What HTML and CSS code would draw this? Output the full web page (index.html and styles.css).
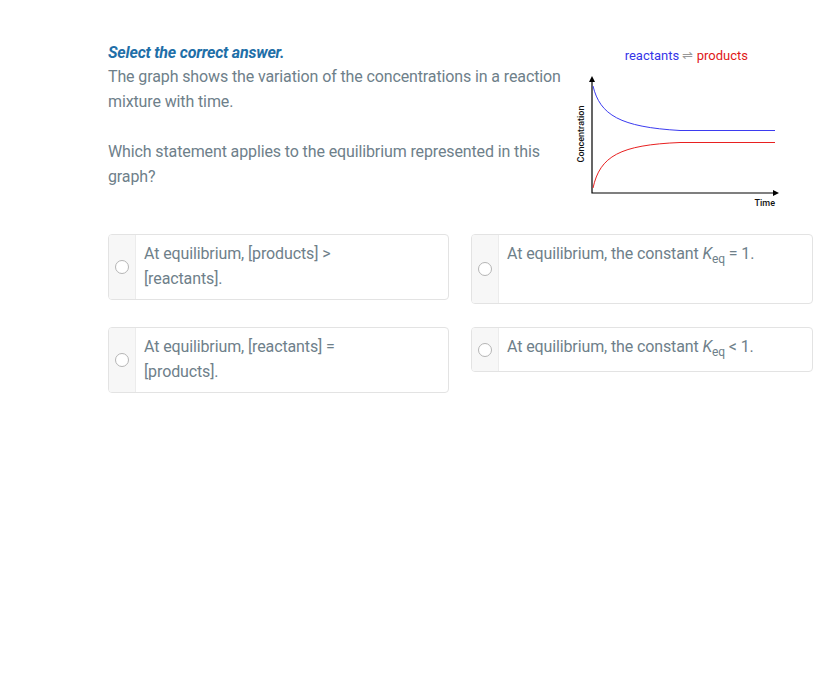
FILE: index.html
```html
<!DOCTYPE html>
<html>
<head>
<meta charset="utf-8">
<link rel="stylesheet" href="styles.css">
</head>
<body>
<div class="page">
  <div class="question">
    <div class="stem">
      <p class="instr">Select the correct answer.</p>
      <p class="txt">The graph shows the variation of the concentrations in a reaction mixture with time.</p>
      <p class="txt">Which statement applies to the equilibrium represented in this graph?</p>
    </div>
    <div class="figure">
      <div class="eq"><span class="blue">reactants</span> <span class="arrows">&#8652;</span> <span class="red">products</span></div>
      <svg class="graph" width="210" height="140" viewBox="0 0 210 140">
        <text class="ylabel" x="0" y="0" transform="translate(14 63) rotate(-90)" text-anchor="middle">Concentration</text>
        <path d="M22 10 V122 H206" fill="none" stroke="#000" stroke-width="1.2"/>
        <path d="M22 5 L19 11 L25 11 Z" fill="#000"/>
        <path d="M209 122 L203 119 L203 125 Z" fill="#000"/>
        <path d="M23 15 C 30 44, 50 56, 110 59.5 L205 59.5" fill="none" stroke="#3b3bf0" stroke-width="1"/>
        <path d="M23 117 C 30 85, 50 74, 110 71.5 L205 71.5" fill="none" stroke="#e82020" stroke-width="1"/>
        <text class="xlabel" x="205" y="135" text-anchor="end">Time</text>
      </svg>
    </div>
  </div>
  <div class="options">
    <label class="opt">
      <span class="radio-col"><span class="radio"></span></span>
      <span class="opt-text">At equilibrium, [products] &gt; [reactants].</span>
    </label>
    <label class="opt tall">
      <span class="radio-col"><span class="radio"></span></span>
      <span class="opt-text">At equilibrium, the constant <i class="k">K</i><sub>eq</sub> = 1.</span>
    </label>
    <label class="opt">
      <span class="radio-col"><span class="radio"></span></span>
      <span class="opt-text">At equilibrium, [reactants] = [products].</span>
    </label>
    <label class="opt short">
      <span class="radio-col"><span class="radio"></span></span>
      <span class="opt-text">At equilibrium, the constant <i class="k">K</i><sub>eq</sub> &lt; 1.</span>
    </label>
  </div>
</div>
</body>
</html>
```
FILE: styles.css
```css
html, body {
  margin: 0;
  padding: 0;
  background: #fff;
}
body {
  font-family: Roboto, "Liberation Sans", sans-serif;
  color: #6e808a;
}
.page {
  padding: 40px 18px 0 108px;
  width: 705px;
}
.question {
  display: flex;
  align-items: flex-start;
  justify-content: space-between;
}
.stem {
  width: 466px;
  letter-spacing: -0.12px;
}
.instr {
  margin: 1px 0 0;
  font-weight: 700;
  font-style: italic;
  color: #1f6fa8;
  font-size: 16px;
  line-height: 23px;
  letter-spacing: -0.2px;
}
.txt {
  margin: 0 0 25px;
  font-size: 16px;
  line-height: 25px;
}
.figure {
  width: 218px;
  margin-right: 23px;
  margin-top: 8px;
  display: flex;
  flex-direction: column;
  align-items: center;
}
.eq {
  font-size: 13px;
  line-height: 16px;
  margin-bottom: 7px;
  margin-left: 10px;
}
.blue { color: #3535e8; }
.red { color: #e01818; }
.arrows { color: #999; }
.graph {
  display: block;
  margin-left: -12px;
}
.ylabel, .xlabel {
  font-family: Roboto, "Liberation Sans", sans-serif;
  font-size: 9px;
  font-weight: 500;
  fill: #111;
}
.options {
  margin-top: 20px;
  display: grid;
  grid-template-columns: 341px 342px;
  column-gap: 22px;
  row-gap: 23px;
  align-items: start;
}
.opt {
  display: flex;
  border: 1px solid #e3e3e3;
  border-radius: 4px;
  overflow: hidden;
  min-height: 63px;
}
.opt.tall { min-height: 68px; }
.opt.short { min-height: 43px; }
.radio-col {
  width: 26px;
  flex: none;
  background: #f7f7f7;
  border-right: 1px solid #ececec;
  display: flex;
  align-items: center;
  justify-content: center;
}
.radio {
  width: 14px;
  height: 14px;
  border: 1px solid #b5b5b5;
  border-radius: 50%;
  background: #fff;
  box-sizing: border-box;
  display: block;
}
.opt-text {
  padding: 6px 8px 8px 8px;
  font-size: 16px;
  line-height: 25px;
  max-width: 258px;
  letter-spacing: -0.12px;
}
.k {
  font-style: italic;
}
sub {
  font-size: 12px;
  line-height: 0;
  vertical-align: -4px;
}
```
